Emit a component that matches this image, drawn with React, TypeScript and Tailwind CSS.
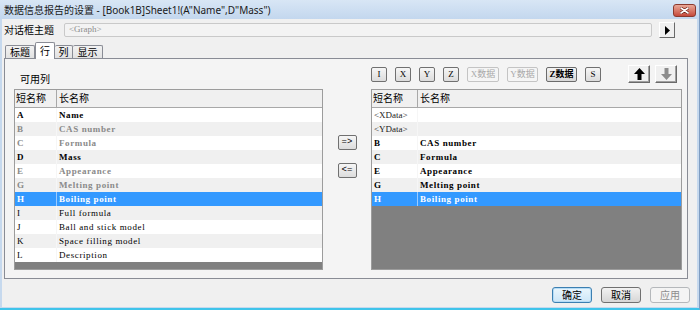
import React from "react";

type Tone = "bold" | "gray" | "normal" | "sel" | "tag";

interface GridRow {
  s: string;
  l: string;
  tone: Tone;
}

const cjk = "font-['Noto_Sans','Noto_Sans_CJK_SC',sans-serif]";
const cell = "font-['Liberation_Serif','Noto_Sans_CJK_SC',serif] text-[9px] tracking-[0.6px]";

const leftRows: GridRow[] = [
  { s: "A", l: "Name", tone: "bold" },
  { s: "B", l: "CAS number", tone: "gray" },
  { s: "C", l: "Formula", tone: "gray" },
  { s: "D", l: "Mass", tone: "bold" },
  { s: "E", l: "Appearance", tone: "gray" },
  { s: "G", l: "Melting point", tone: "gray" },
  { s: "H", l: "Boiling point", tone: "sel" },
  { s: "I", l: "Full formula", tone: "normal" },
  { s: "J", l: "Ball and stick model", tone: "normal" },
  { s: "K", l: "Space filling model", tone: "normal" },
  { s: "L", l: "Description", tone: "normal" },
];

const rightRows: GridRow[] = [
  { s: "<XData>", l: "", tone: "tag" },
  { s: "<YData>", l: "", tone: "tag" },
  { s: "B", l: "CAS number", tone: "bold" },
  { s: "C", l: "Formula", tone: "bold" },
  { s: "E", l: "Appearance", tone: "bold" },
  { s: "G", l: "Melting point", tone: "bold" },
  { s: "H", l: "Boiling point", tone: "sel" },
];

const toneText: Record<Tone, string> = {
  bold: "text-black font-bold",
  gray: "text-[#8a8a8a] font-bold",
  normal: "text-black font-normal",
  sel: "text-white font-bold",
  tag: "text-[#222] font-normal tracking-[0px]",
};

const Grid = ({ rows, shortW }: { rows: GridRow[]; shortW: string }) => (
  <div className="h-[181px] flex flex-col border border-[#9c9c9c] bg-[#808080]">
    <div className={`flex h-[18px] shrink-0 bg-[#f0f0f0] border-b border-[#a8a8a8] ${cjk} text-[10px] leading-[17px] text-black`}>
      <div className={`${shortW} shrink-0 border-r border-[#a8a8a8] pl-[1px]`}>短名称</div>
      <div className="flex-1 pl-[2px]">长名称</div>
    </div>
    {rows.map((r, i) => {
      const bg = r.tone === "sel" ? "bg-[#3399ff]" : i % 2 === 0 ? "bg-white" : "bg-[#f0f0f0]";
      return (
        <div key={r.s + i} className={`flex h-[14px] shrink-0 ${bg} ${cell} leading-[14px] ${toneText[r.tone]}`}>
          <div className={`${shortW} shrink-0 pl-[2px] ${r.tone === "sel" ? "border-r border-[#9ccbff]" : "border-r border-[#f6f6f6]"}`}>{r.s}</div>
          <div className="flex-1 pl-[2px] whitespace-nowrap">{r.l}</div>
        </div>
      );
    })}
  </div>
);

const ToolBtn = ({ label, w, state = "on" }: { label: React.ReactNode; w: string; state?: "on" | "off" | "strong" }) => {
  const look =
    state === "off"
      ? "border-[#c4c4c4] bg-[#f5f5f5] text-[#a9a9a9]"
      : state === "strong"
      ? "border-[#6b6b6b] bg-gradient-to-b from-[#f4f4f4] to-[#d8d8d8] text-black font-bold"
      : "border-[#707070] bg-gradient-to-b from-[#f6f6f6] to-[#dcdcdc] text-black";
  return (
    <div className={`${w} h-[15px] shrink-0 flex items-center justify-center rounded-[2px] border ${look} text-[9px] leading-none font-['Liberation_Serif','Noto_Sans_CJK_SC',serif]`}>
      {label}
    </div>
  );
};

const Arrow = ({ up }: { up?: boolean }) => (
  <div className="w-[22px] h-[18px] shrink-0 flex items-center justify-center bg-[#f0f0f0] border-t border-l border-t-white border-l-white border-b border-r border-b-[#6a6a6a] border-r-[#6a6a6a] shadow-[inset_-1px_-1px_0_#a0a0a0]">
    <svg width="11" height="12" viewBox="0 0 11 12">
      {up ? (
        <polygon points="5.5,0 11,6 7.5,6 7.5,12 3.5,12 3.5,6 0,6" fill="#000" />
      ) : (
        <polygon points="5.5,12 11,6 7.5,6 7.5,0 3.5,0 3.5,6 0,6" fill="#8c8c8c" />
      )}
    </svg>
  </div>
);

const MoveBtn = ({ label }: { label: string }) => (
  <div className="w-[19px] h-[15px] flex items-center justify-center rounded-[2px] border border-[#707070] bg-gradient-to-b from-[#f6f6f6] to-[#dcdcdc] text-[9px] leading-none font-['Liberation_Mono',monospace] text-black">
    {label}
  </div>
);

const DlgBtn = ({ label, kind }: { label: string; kind: "default" | "normal" | "off" }) => {
  const look =
    kind === "default"
      ? "border-[#3c7fb1] bg-gradient-to-b from-[#eaf6fd] to-[#cde6f7] text-black shadow-[inset_0_0_0_1px_#b5dcf6]"
      : kind === "off"
      ? "border-[#b5b8bb] bg-[#f4f4f4] text-[#8d8d8d]"
      : "border-[#707070] bg-gradient-to-b from-[#f2f2f2] to-[#d6d6d6] text-black";
  return (
    <div className={`w-[40px] h-[16px] flex items-center justify-center rounded-[3px] border ${look} ${cjk} text-[10px] leading-none`}>
      {label}
    </div>
  );
};

export default function App() {
  return (
    <div className={`w-[700px] h-[310px] flex flex-col bg-[#c6d9ee] border-r border-[#7f9cc0] border-b-2 border-b-[#3fc4ea] ${cjk}`}>
      {/* title bar */}
      <div className="h-[19px] shrink-0 flex items-start justify-between pl-[4px] pr-[3px] bg-gradient-to-b from-[#d8e6f5] to-[#c3d7ee]">
        <span className="text-[10px] leading-[20px] text-[#1a1a1a] whitespace-nowrap">
          数据信息报告的设置 - [Book1B]Sheet1!(A"Name",D"Mass")
        </span>
        <div className="mt-[4px] w-[23px] h-[13px] flex items-center justify-center rounded-[3px] border border-[#8b3a2e] bg-gradient-to-b from-[#e9a898] to-[#c5483a]">
          <svg width="9" height="7" viewBox="0 0 9 7">
            <path d="M1 1 L8 6 M8 1 L1 6" stroke="#6b1d12" strokeWidth="3" strokeLinecap="round" />
            <path d="M1 1 L8 6 M8 1 L1 6" stroke="#fff" strokeWidth="1.6" strokeLinecap="round" />
          </svg>
        </div>
      </div>

      {/* body */}
      <div className="flex-1 mx-[2px] mb-[1px] bg-[#f0f0f0] flex flex-col">
        <div className="mt-[3px] h-[16px] flex items-center pl-[2px] pr-[22px]">
          <div className="w-[60px] text-[10px] leading-none text-black">对话框主题</div>
          <div className="flex-1 h-[14px] flex items-center pl-[4px] border border-[#c9c9c9] rounded-[2px] bg-[#f3f3f3] text-[9px] text-[#8c8c8c] font-['Liberation_Serif',serif]">
            &lt;Graph&gt;
          </div>
          <div className="ml-[7px] w-[16px] h-[16px] flex items-center justify-center bg-[#f0f0f0] border-t border-l border-t-white border-l-white border-b border-r border-b-[#6a6a6a] border-r-[#6a6a6a]">
            <svg width="5" height="9" viewBox="0 0 5 9">
              <polygon points="0,0 5,4.5 0,9" fill="#000" />
            </svg>
          </div>
        </div>

        {/* tabs */}
        <div className="mt-[4px] h-[16px] flex items-end pl-[3px] text-[10px] leading-none text-black">
          <div className="w-[30px] h-[13px] flex items-center justify-center border border-b-0 border-[#898c95] rounded-t-[2px] bg-gradient-to-b from-[#f2f2f2] to-[#e2e2e2]">标题</div>
          <div className="relative z-10 -mb-[1px] w-[20px] h-[17px] flex items-center justify-center border border-b-0 border-[#898c95] rounded-t-[2px] bg-white">行</div>
          <div className="w-[18px] h-[13px] flex items-center justify-center border border-b-0 border-l-0 border-[#898c95] rounded-t-[2px] bg-gradient-to-b from-[#f2f2f2] to-[#e2e2e2]">列</div>
          <div className="w-[30px] h-[13px] flex items-center justify-center border border-b-0 border-l-0 border-[#898c95] rounded-t-[2px] bg-gradient-to-b from-[#f2f2f2] to-[#e2e2e2]">显示</div>
        </div>

        {/* panel */}
        <div className="ml-[2px] mr-[9px] h-[221px] shrink-0 flex border border-[#898c95] bg-[#f4f4f4] pl-[9px] pr-[5px]">
          <div className="w-[309px] flex flex-col">
            <div className="h-[30px] flex items-end pb-[5px] pl-[6px] text-[10px] leading-none text-black">可用列</div>
            <Grid rows={leftRows} shortW="w-[42px]" />
          </div>

          <div className="w-[48px] flex flex-col items-center pt-[76px] gap-[13px]">
            <MoveBtn label="=>" />
            <MoveBtn label="<=" />
          </div>

          <div className="w-[311px] flex flex-col">
            <div className="mt-[6px] h-[18px] flex items-center">
              <div className="flex items-center gap-[8px]">
                <ToolBtn label="I" w="w-[16px]" />
                <ToolBtn label="X" w="w-[16px]" />
                <ToolBtn label="Y" w="w-[16px]" />
                <ToolBtn label="Z" w="w-[16px]" />
                <ToolBtn label="X数据" w="w-[32px]" state="off" />
                <ToolBtn label="Y数据" w="w-[31px]" state="off" />
                <ToolBtn label="Z数据" w="w-[31px]" state="strong" />
                <ToolBtn label="S" w="w-[16px]" />
              </div>
              <div className="ml-[27px] flex items-center gap-[5px]">
                <Arrow up />
                <Arrow />
              </div>
            </div>
            <div className="mt-[6px]">
              <Grid rows={rightRows} shortW="w-[46px]" />
            </div>
          </div>
        </div>

        {/* dialog buttons */}
        <div className="mt-[8px] flex justify-end gap-[9px] pr-[7px]">
          <DlgBtn label="确定" kind="default" />
          <DlgBtn label="取消" kind="normal" />
          <DlgBtn label="应用" kind="off" />
        </div>
      </div>
    </div>
  );
}
